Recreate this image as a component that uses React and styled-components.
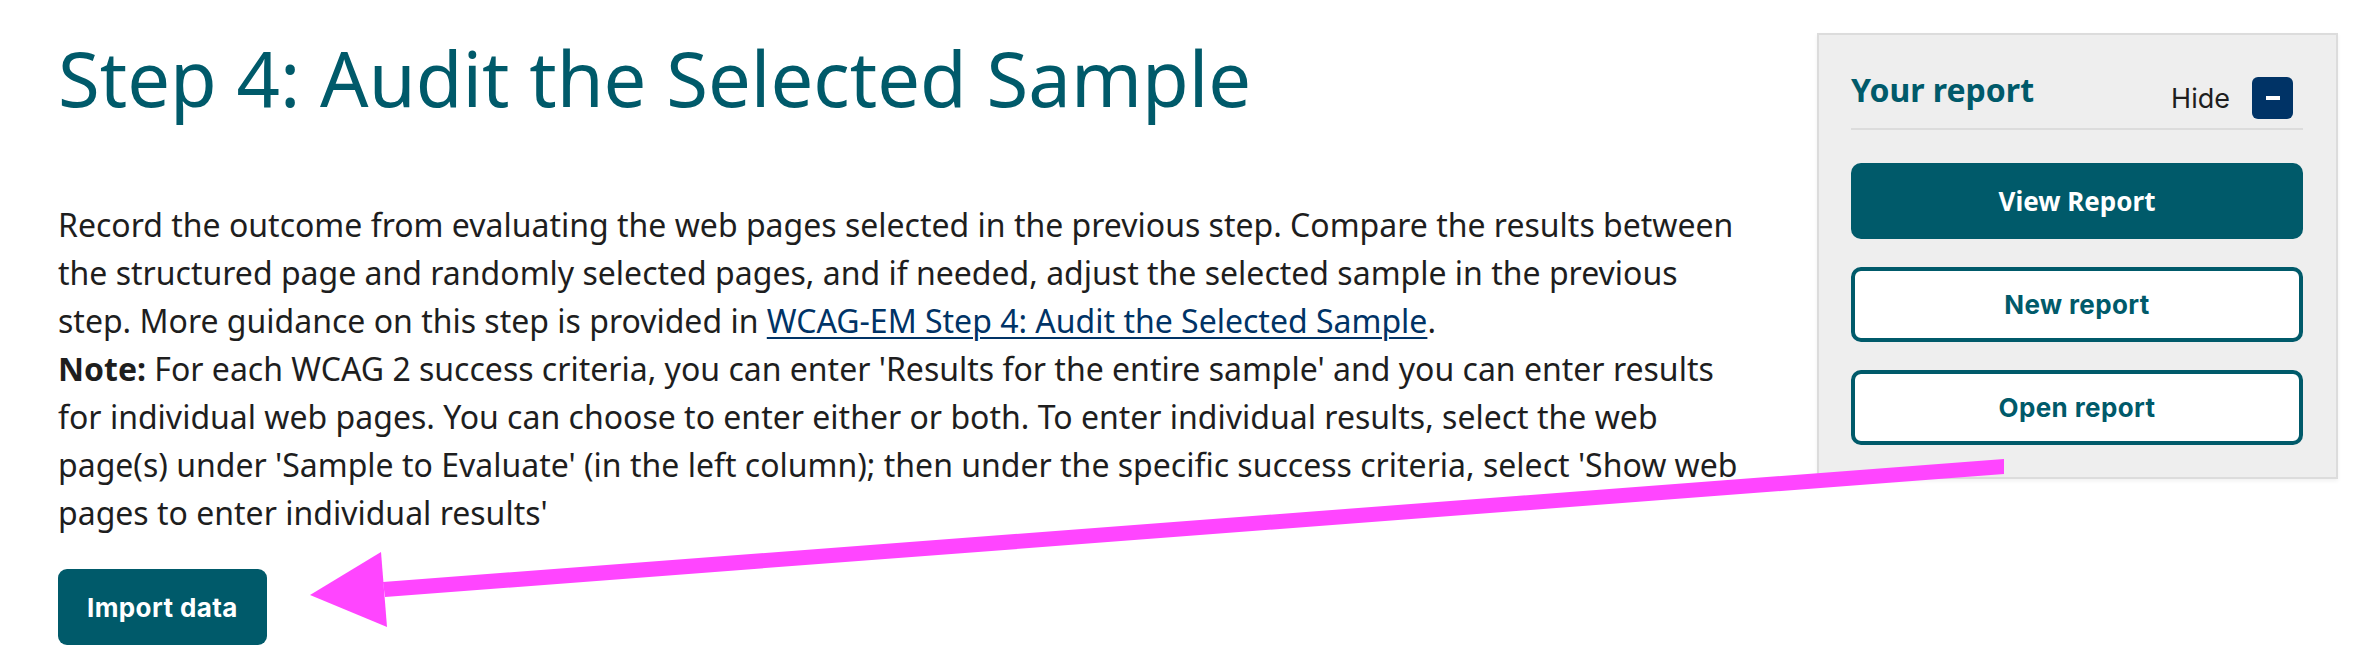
import React from "react";
import styled, { createGlobalStyle } from "styled-components";

const GlobalStyle = createGlobalStyle`
  html, body {
    margin: 0;
    padding: 0;
    background: #fff;
  }
  body {
    font-family: "Noto Sans", "Liberation Sans", sans-serif;
    color: #1e1e1e;
  }
`;

const Page = styled.div`
  position: relative;
  width: 2378px;
  height: 666px;
  display: flex;
  align-items: flex-start;
  overflow: hidden;
`;

const Main = styled.main`
  flex: 1;
  padding-left: 58px;
`;

const Title = styled.h1`
  margin: 33px 0 0;
  font-size: 76px;
  line-height: 90px;
  font-weight: 400;
  color: #005a6a;
`;

const Intro = styled.p`
  margin: 78px 0 0;
  max-width: 1690px;
  font-size: 32px;
  line-height: 48px;
`;

const Link = styled.a`
  color: #036;
  text-decoration: underline;
  text-underline-offset: 4px;
  text-decoration-thickness: 2px;
`;

const SolidButton = styled.button`
  display: block;
  margin-top: 32px;
  height: 76px;
  padding: 0 29px;
  border: none;
  border-radius: 9px;
  background: #005a6a;
  color: #fff;
  font-family: Inter, "Liberation Sans", sans-serif;
  font-weight: 700;
  font-size: 26px;
  letter-spacing: 0.4px;
`;

const Aside = styled.aside`
  width: 521px;
  box-sizing: border-box;
  margin: 33px 40px 0 0;
  padding: 36px 33px 32px 32px;
  background: #eee;
  border: 2px solid #dcdcdc;
  box-shadow: 0 2px 4px rgba(0, 0, 0, 0.06);
`;

const PanelHeader = styled.div`
  display: flex;
  justify-content: space-between;
  align-items: flex-start;
  padding-bottom: 9px;
  border-bottom: 2px solid #dcdcdc;
`;

const PanelTitle = styled.h2`
  margin: 0;
  font-size: 32px;
  line-height: 38px;
  font-weight: 700;
  color: #005a6a;
`;

const HideControl = styled.div`
  display: flex;
  align-items: center;
  gap: 22px;
  margin: 6px 10px 0 0;
  font-family: Inter, "Liberation Sans", sans-serif;
  font-size: 27px;
  color: #1e1e1e;
`;

const MinusButton = styled.button`
  width: 41px;
  height: 42px;
  padding: 0;
  border: none;
  border-radius: 6px;
  background: #036;
  display: flex;
  align-items: center;
  justify-content: center;

  &::before {
    content: "";
    width: 14px;
    height: 4px;
    background: #fff;
  }
`;

const ButtonStack = styled.div`
  display: flex;
  flex-direction: column;
  gap: 28px;
  margin-top: 33px;
`;

const PanelButton = styled.button`
  height: ${(props) => (props.primary ? "76px" : "75px")};
  width: 100%;
  border-radius: 10px;
  border: ${(props) => (props.primary ? "none" : "4px solid #005a6a")};
  background: ${(props) => (props.primary ? "#005a6a" : "#fff")};
  color: ${(props) => (props.primary ? "#fff" : "#005a6a")};
  font-family: ${(props) =>
    props.primary
      ? `"Noto Sans", "Liberation Sans", sans-serif`
      : `Inter, "Liberation Sans", sans-serif`};
  font-weight: 700;
  font-size: 26px;
  letter-spacing: ${(props) => (props.primary ? "0" : "0.4px")};
`;

const Annotation = styled.svg`
  position: absolute;
  left: 0;
  top: 0;
  pointer-events: none;
`;

const App = () => {
  return (
    <>
      <GlobalStyle />
      <Page>
        <Main>
          <Title>Step 4: Audit the Selected Sample</Title>
          <Intro>
            Record the outcome from evaluating the web pages selected in the
            previous step. Compare the results between the structured page and
            randomly selected pages, and if needed, adjust the selected sample
            in the previous step. More guidance on this step is provided in{" "}
            <Link href="#">WCAG-EM Step 4: Audit the Selected Sample</Link>.
            <br />
            <strong>Note:</strong> For each WCAG 2 success criteria, you can
            enter 'Results for the entire sample' and you can enter results for
            individual web pages. You can choose to enter either or both. To
            enter individual results, select the web page(s) under 'Sample to
            Evaluate' (in the left column); then under the specific success
            criteria, select 'Show web pages to enter individual results'
          </Intro>
          <SolidButton>Import data</SolidButton>
        </Main>
        <Aside>
          <PanelHeader>
            <PanelTitle>Your report</PanelTitle>
            <HideControl>
              Hide
              <MinusButton aria-label="Hide" />
            </HideControl>
          </PanelHeader>
          <ButtonStack>
            <PanelButton primary>View Report</PanelButton>
            <PanelButton>New report</PanelButton>
            <PanelButton>Open report</PanelButton>
          </ButtonStack>
        </Aside>
        <Annotation width="2378" height="666" viewBox="0 0 2378 666">
          <polygon
            fill="#ff45ff"
            points="383,582 2004,459 2004,474 385,597"
          />
          <polygon fill="#ff45ff" points="310,595 381,552 387,627" />
        </Annotation>
      </Page>
    </>
  );
};

export default App;
